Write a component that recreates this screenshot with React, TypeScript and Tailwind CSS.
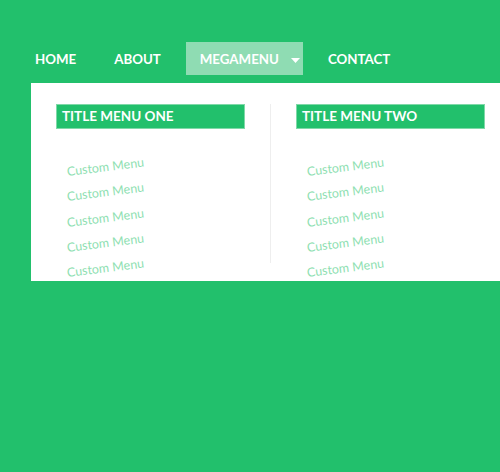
const navItems = ['HOME', 'ABOUT', 'MEGAMENU', 'CONTACT'];
const links = ['Custom Menu', 'Custom Menu', 'Custom Menu', 'Custom Menu', 'Custom Menu'];

function Column({ title }: { title: string }) {
  return (
    <div className="w-[189px]">
      <div className="flex h-[25px] items-center border border-[#7fd9a8] bg-[#22c06c] px-[5px] text-[13.5px] font-bold text-white">
        {title}
      </div>
      <ul className="mt-[29px] flex flex-col pl-[11px]">
        {links.map((l, i) => (
          <li key={i} className="h-[25.3px]">
            <a className="inline-block origin-left -rotate-[7deg] text-[12.5px] text-[#8fdfb2]">{l}</a>
          </li>
        ))}
      </ul>
    </div>
  );
}

export default function App() {
  return (
    <div className="h-[472px] w-[500px] overflow-hidden bg-[#22c06c] font-['Lato','Open_Sans',sans-serif]">
      <nav className="flex gap-[12px] pl-[22px] pt-[42px]">
        {navItems.map((item) => (
          <div
            key={item}
            className={
              item === 'MEGAMENU'
                ? 'flex h-[33px] items-center bg-[#8fdcb3] pl-[14px] pr-[3px] pt-[3px] text-[13.3px] font-bold text-white'
                : 'flex h-[33px] items-center px-[13px] pt-[3px] text-[13.3px] font-bold text-white'
            }
          >
            {item}
            {item === 'MEGAMENU' && (
              <svg width="9" height="5" viewBox="0 0 9 5" className="ml-[12px]">
                <path d="M0 0h9L4.5 5z" fill="#fff" />
              </svg>
            )}
          </div>
        ))}
      </nav>
      <div className="ml-[31px] mt-[8px] flex h-[198px] bg-white pl-[25px] pt-[21px]">
        <Column title="TITLE MENU ONE" />
        <div className="mx-[25px] h-[159px] w-px bg-[#eeeeee]" />
        <Column title="TITLE MENU TWO" />
      </div>
    </div>
  );
}
